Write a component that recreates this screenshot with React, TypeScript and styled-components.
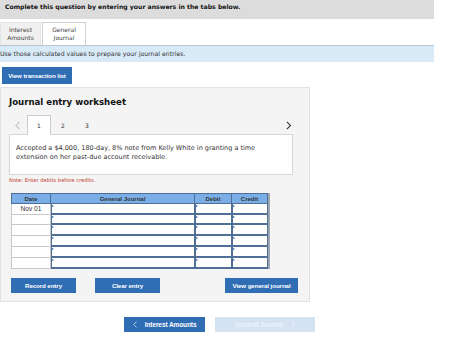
import React from 'react';
import styled, { createGlobalStyle } from 'styled-components';

const GlobalStyle = createGlobalStyle`
  body {
    margin: 0;
    background: #fff;
    font-family: "DejaVu Sans", Verdana, sans-serif;
    color: #222;
  }
`;

const Page = styled.div`
  width: 474px;
  height: 353px;
  overflow: hidden;
`;

const TopBar = styled.div`
  width: 434px;
  height: 19px;
  box-sizing: border-box;
  padding: 3px 0 0 5px;
  background: #dcdcdc;
  font-weight: bold;
  font-size: 6.15px;
  line-height: 8px;
  color: #111;
`;

const TabRow = styled.div`
  display: flex;
  margin-top: 3px;
  height: 23px;
`;

const Tab = styled.div<{ $active?: boolean }>`
  box-sizing: border-box;
  width: ${p => (p.$active ? 44 : 41)}px;
  margin-left: ${p => (p.$active ? 1 : 0)}px;
  display: flex;
  align-items: center;
  justify-content: center;
  text-align: center;
  font-size: 6px;
  line-height: 8px;
  color: #444;
  background: ${p => (p.$active ? '#fff' : '#f0f0f0')};
  border: 1px solid ${p => (p.$active ? '#d0d0d0' : '#e6e6e6')};
  border-bottom: none;
`;

const InfoBar = styled.div`
  width: 434px;
  height: 17px;
  box-sizing: border-box;
  border-top: 1px solid #b5c6d6;
  background: #d9eaf7;
  font-size: 6.2px;
  line-height: 16px;
  color: #333;
`;

const BlueButton = styled.button<{ $w: number; $ml?: number }>`
  display: block;
  box-sizing: border-box;
  width: ${p => p.$w}px;
  height: 15px;
  margin-left: ${p => p.$ml ?? 0}px;
  padding: 0;
  border: none;
  background: #2f6db5;
  color: #fff;
  font-family: "Liberation Sans", Arial, sans-serif;
  font-weight: bold;
  font-size: 6.2px;
  letter-spacing: -0.1px;
`;

const TransactionButton = styled(BlueButton)`
  height: 17px;
  margin: 5px 0 0 2px;
`;

const Panel = styled.div`
  box-sizing: border-box;
  width: 310px;
  height: 215px;
  margin-top: 3px;
  padding: 8px 0 0 8px;
  background: #f4f4f4;
  border: 1px solid #e2e2e2;
`;

const Title = styled.div`
  font-weight: bold;
  font-size: 8.6px;
  line-height: 12px;
  color: #111;
`;

const NavRow = styled.div`
  display: flex;
  align-items: stretch;
  width: 289px;
  height: 20px;
  margin-top: 7px;
`;

const Arrow = styled.div`
  width: 18px;
  display: flex;
  align-items: center;
  justify-content: center;
`;

const StepTab = styled.div<{ $active?: boolean }>`
  box-sizing: border-box;
  width: 24px;
  display: flex;
  align-items: center;
  justify-content: center;
  font-size: 6px;
  color: #333;
  position: relative;
  z-index: 1;
  background: ${p => (p.$active ? '#fff' : 'transparent')};
  border: 1px solid ${p => (p.$active ? '#ccc' : 'transparent')};
  border-bottom: none;
`;

const Spacer = styled.div`
  flex: 1;
`;

const DescBox = styled.div`
  box-sizing: border-box;
  width: 284px;
  height: 41px;
  margin-top: -1px;
  padding: 9px 12px 0 6px;
  background: #fff;
  border: 1px solid #d6d6d6;
  font-size: 6.5px;
  line-height: 8.5px;
  color: #333;
`;

const Note = styled.div`
  margin-top: 2px;
  font-size: 5.2px;
  line-height: 7px;
  color: #c0392b;
`;

const Grid = styled.div`
  display: grid;
  grid-template-columns: 40px 144px 37px 36px;
  grid-auto-rows: 10.8px;
  width: 257px;
  margin: 9px 0 0 2px;
  border-right: 2px solid #9ea6b0;
`;

const HeadCell = styled.div`
  box-sizing: border-box;
  height: 11px;
  display: flex;
  align-items: center;
  justify-content: center;
  background: #7baee6;
  border: 1px solid #4f6f96;
  border-left-width: 0;
  font-family: "Liberation Sans", Arial, sans-serif;
  font-weight: bold;
  font-size: 6px;
  color: #333;

  &:first-child {
    border-left-width: 1px;
  }
`;

const DateCell = styled.div`
  box-sizing: border-box;
  display: flex;
  align-items: center;
  justify-content: center;
  background: #fff;
  border: 1px solid #c8c8c8;
  border-top: none;
  font-family: "Liberation Sans", Arial, sans-serif;
  font-size: 6.6px;
  color: #333;
`;

const InputCell = styled.div`
  box-sizing: border-box;
  position: relative;
  background: #fff;
  border: 1px solid #4f6f96;
  border-top: none;
  border-bottom-width: 2px;
  border-left-width: 1px;

  &::before {
    content: '';
    position: absolute;
    left: 0;
    top: 1px;
    width: 0;
    height: 0;
    border-top: 1.5px solid transparent;
    border-bottom: 1.5px solid transparent;
    border-left: 2px solid #2f6db5;
  }
`;

const ActionRow = styled.div`
  display: flex;
  margin-top: 9px;
`;

const BottomNav = styled.div`
  display: flex;
  gap: 10px;
  margin-top: 15px;
  padding-left: 124px;
`;

const NavButton = styled(BlueButton)<{ $disabled?: boolean }>`
  display: flex;
  align-items: center;
  justify-content: center;
  gap: 8px;
  font-size: 6.5px;
  background: ${p => (p.$disabled ? '#d4e2f2' : '#2f6db5')};
  color: ${p => (p.$disabled ? '#eef4fb' : '#fff')};
`;

const Chevron = ({ dir, color, size = 9 }: { dir: 'left' | 'right'; color: string; size?: number }) => (
  <svg width={size * 0.6} height={size} viewBox="0 0 6 10" fill="none">
    <path
      d={dir === 'left' ? 'M5 1 L1 5 L5 9' : 'M1 1 L5 5 L1 9'}
      stroke={color}
      strokeWidth={dir === 'left' ? 0.9 : 1.2}
    />
  </svg>
);

const rows = ['Nov 01', '', '', '', '', ''];

export default function App() {
  return (
    <Page>
      <GlobalStyle />
      <TopBar>Complete this question by entering your answers in the tabs below.</TopBar>
      <TabRow>
        <Tab>
          Interest
          <br />
          Amounts
        </Tab>
        <Tab $active>
          General
          <br />
          Journal
        </Tab>
      </TabRow>
      <InfoBar>Use those calculated values to prepare your journal entries.</InfoBar>
      <TransactionButton $w={70}>View transaction list</TransactionButton>

      <Panel>
        <Title>Journal entry worksheet</Title>
        <NavRow>
          <Arrow>
            <Chevron dir="left" color="#999" />
          </Arrow>
          <StepTab $active>1</StepTab>
          <StepTab>2</StepTab>
          <StepTab>3</StepTab>
          <Spacer />
          <Arrow>
            <Chevron dir="right" color="#333" />
          </Arrow>
        </NavRow>
        <DescBox>
          Accepted a $4,000, 180-day, 8% note from Kelly White in granting a time extension on her
          past-due account receivable.
        </DescBox>
        <Note>Note: Enter debits before credits.</Note>

        <Grid>
          <HeadCell>Date</HeadCell>
          <HeadCell>General Journal</HeadCell>
          <HeadCell>Debit</HeadCell>
          <HeadCell>Credit</HeadCell>
          {rows.map((d, i) => (
            <React.Fragment key={i}>
              <DateCell>{d}</DateCell>
              <InputCell />
              <InputCell />
              <InputCell />
            </React.Fragment>
          ))}
        </Grid>

        <ActionRow>
          <BlueButton $w={65} $ml={2}>Record entry</BlueButton>
          <BlueButton $w={65} $ml={19}>Clear entry</BlueButton>
          <BlueButton $w={73} $ml={65}>View general journal</BlueButton>
        </ActionRow>
      </Panel>

      <BottomNav>
        <NavButton $w={81}>
          <Chevron dir="left" color="#fff" size={7} />
          Interest Amounts
        </NavButton>
        <NavButton $w={100} $disabled>
          General Journal
          <Chevron dir="right" color="#eef4fb" size={7} />
        </NavButton>
      </BottomNav>
    </Page>
  );
}
